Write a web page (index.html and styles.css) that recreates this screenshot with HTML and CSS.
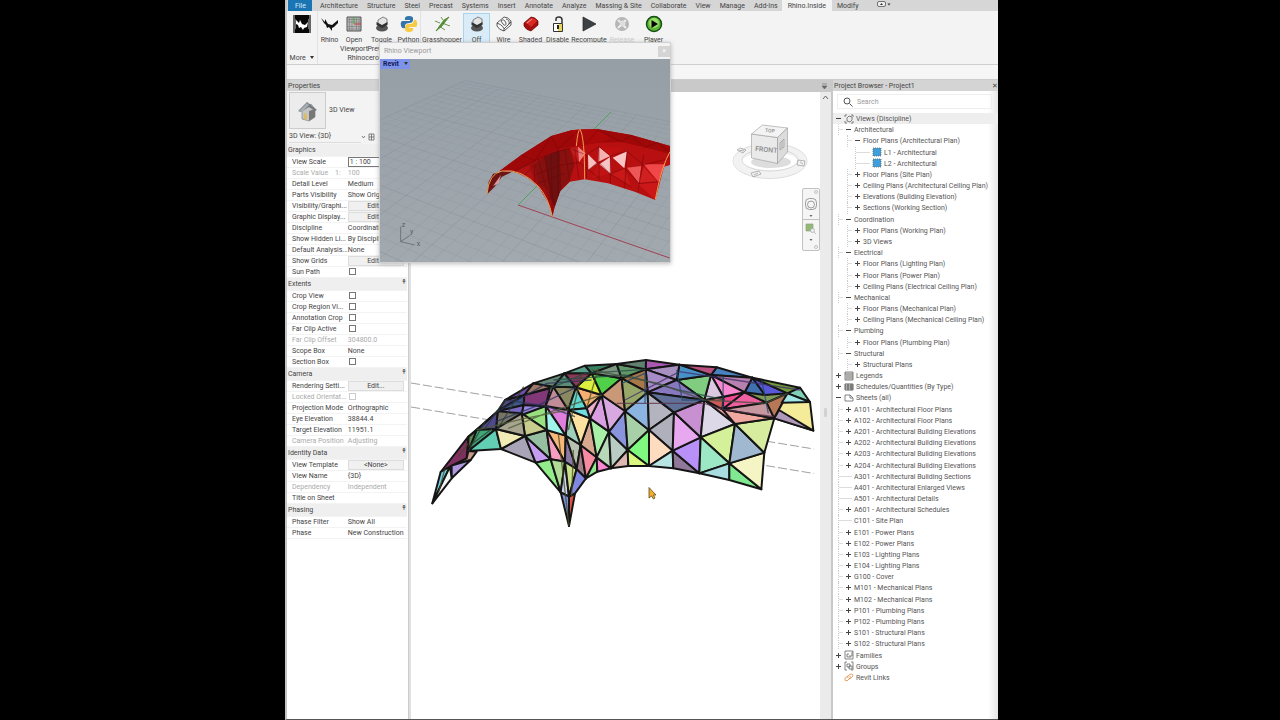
FILE: index.html
```html
<!DOCTYPE html>
<html lang="en">
<head>
    <meta charset="UTF-8">
    <meta name="viewport" content="width=device-width, initial-scale=1.0">
    <title>Project1 - 3D View</title>
    <link rel="stylesheet" href="styles.css">
</head>
<body>
    <div class="app">
        <nav class="tabs">
            <button class="file">File</button>
            <button>Architecture</button>
            <button>Structure</button>
            <button>Steel</button>
            <button>Precast</button>
            <button>Systems</button>
            <button>Insert</button>
            <button>Annotate</button>
            <button>Analyze</button>
            <button>Massing &amp; Site</button>
            <button>Collaborate</button>
            <button>View</button>
            <button>Manage</button>
            <button>Add-Ins</button>
            <button class="active">Rhino.Inside</button>
            <button>Modify</button>
            <button class="more-tabs" aria-label="Ribbon display">
                <svg width="14" height="7" viewBox="0 0 14 7"><rect x=".5" y=".5" width="8" height="5" rx="1.5" fill="#eee" stroke="#555" stroke-width=".8"/><path d="M3 4l1.500-2L6 4zM10.500 2.500h3L12 4.500z" fill="#333"/></svg>
            </button>
        </nav>

        <div class="ribbon">
            <div class="panel first">
                <button class="tool" aria-label="Rhino.Inside">
                    <svg viewBox="0 0 18 18"><path d="M0 0h18v18H0z" fill="#666"/><path d="M2 0h14v4h-1v10h1v4H2v-4h1V4H2z" fill="#080808"/><path d="M3 5l3 3 1-3 2 4 3 1 3-3-1 5-3 1-1 2-2-3-2 1-1-3-2-1z" fill="#fff"/></svg>
                </button>
                <button class="caption">More <span class="down"></span></button>
            </div>
            <div class="panel rhino">
                <div class="tools">
                    <button class="tool"><svg viewBox="0 0 18 18"><path d="M0 3l4 4V4l3 5 4 1 6-5v3l-4 4-2 1v3l-3-4-2 1-1-3-2-2z" fill="#111"/></svg>Rhino</button>
                    <button class="tool open"><svg viewBox="0 0 18 18"><path d="M2 2h14v14H2z" fill="#b9b9b9" stroke="#555"/><path d="M4.500 2v14M7 2v14M11.500 2v14M14 2v14M2 4.500h14M2 7h14M2 11.500h14M2 14h14" stroke="#777" stroke-width=".6"/><path d="M9 9h7" stroke="#c33"/><path d="M9 2v7" stroke="#3a3"/></svg>Open<br>Viewport</button>
                    <button class="tool toggle-tool"><svg viewBox="0 0 18 18"><ellipse cx="9" cy="13" rx="6" ry="3.500" fill="#555"/><path d="M5 5l5-3 4 2v5l-5 3-4-3z" fill="#e4e4e4" stroke="#555" stroke-width=".7"/><path d="M3.500 7l5.500 3 5.500-3v3l-5.500 3-5.500-3z" fill="#333"/></svg>Toggle<br>Previews</button>
                    <button class="tool"><svg viewBox="0 0 18 18"><path d="M9 1q-5 0-4 4h5v1H3q-3 0-2 5 1 3 4 2v-3q1-2 4-2 4 0 4-3 1-4-4-4z" fill="#3474a9"/><path d="M9 17q5 0 4-4H9v-1h6q3 0 2-5-1-3-3-2-1 4-3 4-5-1-6 3-1 5 4 5z" fill="#f6cb42"/></svg>Python</button>
                </div>
                <span class="caption">Rhinoceros</span>
            </div>
            <div class="tools">
                <button class="tool grass"><svg viewBox="0 0 18 18"><path d="M3 16l5-7 3-4 5-3-4 5-3 4zM7 8L2 6M9 8l8 3M6 11l6 4M10 5L8 2" fill="#5c9838" stroke="#477d29" stroke-width=".8"/></svg>Grasshopper</button>
                <button class="tool on"><svg viewBox="0 0 18 18"><ellipse cx="9" cy="13" rx="6" ry="3.500" fill="#555"/><path d="M5 5l5-3 4 2v5l-5 3-4-3z" fill="#e4e4e4" stroke="#555" stroke-width=".7"/><path d="M3.500 7l5.500 3 5.500-3v3l-5.500 3-5.500-3z" fill="#333"/></svg>Off</button>
                <button class="tool"><svg viewBox="0 0 18 18" fill="#f7f7f7" stroke="#333" stroke-width=".8"><path d="M2 8l7-6q4 0 7 4v4l-7 6q-5-1-7-5z"/><path d="M9 16q1-5-7-8m7 6l7-7M6 6q3-3 5 2 0 4-3 1zM11 4q4 1 3 5" fill="none"/></svg>Wire</button>
                <button class="tool"><svg viewBox="0 0 18 18"><path d="M2 8l7-6q4 0 7 4v4l-7 6q-5-1-7-5z" fill="#a31010" stroke="#650505" stroke-width=".7"/><path d="M3 8l6-5q4 0 6 3l-6 6q-2-3-6-4z" fill="#d82a26"/><path d="M5 8l5-4" stroke="#ff9f97"/></svg>Shaded</button>
                <button class="tool"><svg viewBox="0 0 18 18"><path d="M7 6V4q0-2 3-2 3 0 3 3v3" fill="none" stroke="#333" stroke-width="1.500"/><path d="M4.500 8.500h9v8h-9z" fill="#fff" stroke="#333"/><path d="M10 9h3v7h-4z" fill="#e7d55c"/><path d="M8 10h2v4H8z" fill="#222"/></svg>Disable</button>
                <button class="tool wide"><svg viewBox="0 0 18 18"><path d="M3 2l13 7-13 7z" fill="#3d4144" stroke="#222" stroke-width=".7"/></svg>Recompute</button>
                <button class="tool dim"><svg viewBox="0 0 18 18"><circle cx="9" cy="9" r="7" fill="#b6b6b6"/><path d="M5 5l8 8m0-8l-8 8" stroke="#eee" stroke-width="2"/><path d="M6 7l4-2 3 4-4 3z" fill="#ddd"/></svg>Release</button>
                <button class="tool player"><svg viewBox="0 0 18 18"><circle cx="9" cy="9" r="7.500" fill="#5fb53a" stroke="#174d16" stroke-width="1.500"/><circle cx="9" cy="8" r="5" fill="#98df68"/><path d="M6.500 5l6.500 4-6.500 4z" fill="#050505"/></svg>Player</button>
            </div>
        </div>
        <div class="options"></div>

        <main class="work">
            <section class="properties">
                <h2>Properties</h2>
                <div class="type">
                    <button aria-label="Type"><svg width="22" height="22" viewBox="0 0 22 22"><path d="M5 10v9l7 2 6-4v-8l-4-5z" fill="#c5c5c5" stroke="#777" stroke-width=".6"/><path d="M12 11v10l6-4V9z" fill="#777"/><path d="M1 11l9-9 10 8-2 1-6-4-8 5z" fill="#737b80"/><path d="M2 11l8-8 2 2-7 7z" fill="#a8afb3"/><path d="M7 13l3 1v6l-3-1z" fill="#dbbd65"/></svg></button>
                    <span>3D View</span>
                </div>
                <div class="instance">
                    <select aria-label="Instance"><option>3D View: {3D}</option></select>
                    <svg width="14" height="8" viewBox="0 0 14 8" fill="none" stroke="#555" stroke-width=".7"><path d="M1 3l1.500 2L4 3"/><path d="M8 1h5v6H8zM10.500 1v6M8 4h5"/></svg>
                </div>
                <table>
                    <tbody>
                        <tr class="group"><th colspan="2">Graphics</th></tr>
                        <tr><th>View Scale</th><td><input class="scale" type="text" value="1 : 100" aria-label="View Scale"></td></tr>
                        <tr class="off"><th>Scale Value &nbsp;&nbsp; 1:</th><td>100</td></tr>
                        <tr><th>Detail Level</th><td>Medium</td></tr>
                        <tr><th>Parts Visibility</th><td>Show Original</td></tr>
                        <tr><th>Visibility/Graphi...</th><td><button>Edit...</button></td></tr>
                        <tr><th>Graphic Display...</th><td><button>Edit...</button></td></tr>
                        <tr><th>Discipline</th><td>Coordination</td></tr>
                        <tr><th>Show Hidden Li...</th><td>By Discipline</td></tr>
                        <tr><th>Default Analysis...</th><td>None</td></tr>
                        <tr><th>Show Grids</th><td><button>Edit...</button></td></tr>
                        <tr><th><label for="sun">Sun Path</label></th><td><input type="checkbox" id="sun"></td></tr>
                        <tr class="group"><th colspan="2">Extents<i>&#8607;</i></th></tr>
                        <tr><th><label for="crop">Crop View</label></th><td><input type="checkbox" id="crop"></td></tr>
                        <tr><th><label for="region">Crop Region Vi...</label></th><td><input type="checkbox" id="region"></td></tr>
                        <tr><th><label for="anno">Annotation Crop</label></th><td><input type="checkbox" id="anno"></td></tr>
                        <tr><th><label for="clip">Far Clip Active</label></th><td><input type="checkbox" id="clip"></td></tr>
                        <tr class="off"><th>Far Clip Offset</th><td>304800.0</td></tr>
                        <tr><th>Scope Box</th><td>None</td></tr>
                        <tr><th><label for="section">Section Box</label></th><td><input type="checkbox" id="section"></td></tr>
                        <tr class="group"><th colspan="2">Camera<i>&#8607;</i></th></tr>
                        <tr><th>Rendering Setti...</th><td><button>Edit...</button></td></tr>
                        <tr class="off"><th><label for="locked">Locked Orientat...</label></th><td><input type="checkbox" id="locked" disabled></td></tr>
                        <tr><th>Projection Mode</th><td>Orthographic</td></tr>
                        <tr><th>Eye Elevation</th><td>38844.4</td></tr>
                        <tr><th>Target Elevation</th><td>11951.1</td></tr>
                        <tr class="off"><th>Camera Position</th><td>Adjusting</td></tr>
                        <tr class="group"><th colspan="2">Identity Data<i>&#8607;</i></th></tr>
                        <tr><th>View Template</th><td><button>&lt;None&gt;</button></td></tr>
                        <tr><th>View Name</th><td>{3D}</td></tr>
                        <tr class="off"><th>Dependency</th><td>Independent</td></tr>
                        <tr><th>Title on Sheet</th><td></td></tr>
                        <tr class="group"><th colspan="2">Phasing<i>&#8607;</i></th></tr>
                        <tr><th>Phase Filter</th><td>Show All</td></tr>
                        <tr><th>Phase</th><td>New Construction</td></tr>
                    </tbody>
                </table>
            </section>

            <section class="canvas">
                <div class="viewbar"><svg width="7" height="7" viewBox="0 0 7 7"><path d="M1 1h5M1 3h5L3.500 6z" fill="#666" stroke="#666" stroke-width=".6"/></svg></div>
                <svg class="scene" viewBox="411 92 409 627" preserveAspectRatio="xMidYMin meet">
                    <g stroke="#777" stroke-width=".7" stroke-dasharray="9 3">
                        <path d="M411 383L814 449M411 407L814 473.500"/>
                    </g>
                    <g id="mesh" transform="translate(425 350) scale(.33333)"></g>
                    <path d="M649 487.500v10.500l2.500-2 2 3 1.500-1-1.500-3h2.500z" fill="#f2ae27" stroke="#4c3716" stroke-width=".7"/>
                    <g class="cube">
                        <ellipse cx="770" cy="161" rx="32" ry="13" fill="none" stroke="#f2f2f2" stroke-width="8"/>
                        <ellipse cx="770" cy="161" rx="37" ry="17.500" fill="none" stroke="#c6c6c6" stroke-width=".6"/>
                        <ellipse cx="770" cy="160" rx="28" ry="11" fill="none" stroke="#c6c6c6" stroke-width=".6"/>
                        <ellipse cx="771" cy="162" rx="20" ry="6" fill="#ddd"/>
                        <path d="M751.500 134l26 3.500v26l-26-5.500z" fill="#eaeaea" stroke="#999" stroke-width=".6"/>
                        <path d="M751.500 134l11-9 25 3-10 9.500z" fill="#f3f3f3" stroke="#999" stroke-width=".6"/>
                        <path d="M777.500 137.500l10-9.500v24l-10 11.500z" fill="#dcdcdc" stroke="#999" stroke-width=".6"/>
                        <text x="755" y="151" font-size="7" transform="rotate(5 755 151)">FRONT</text>
                        <text x="765" y="132" font-size="5" transform="rotate(5 765 132)">TOP</text>
                        <g fill="none" stroke="#999" stroke-width=".7"><path d="M737 150l3-2 6 2-3 3zM739 150l5 1M798 160l7 1-1 5-7-1zM800 162l3 2M751 173l8-2 2 3-8 3zM754 175l4-2M780 143l4-4v8l-4 3zM782 141v7"/></g>
                    </g>
                    <g class="navbar" fill="none" stroke="#a9a9a9" stroke-width=".7">
                        <rect x="802.500" y="188.500" width="17" height="62" rx="1.500" fill="#f5f5f5"/>
                        <path d="M803 219.500h16"/><circle cx="816" cy="192" r="1.500"/><circle cx="816" cy="247" r="1.500"/>
                        <rect x="805.500" y="198.500" width="11" height="11" rx="4" stroke="#777"/><circle cx="811" cy="204.500" r="3.500" stroke="#777"/>
                        <path d="M806 224h7v7h-7z" fill="#94b878" stroke="#8ba87a"/><circle cx="812.500" cy="230.500" r="2" fill="#eee"/><path d="M814 232l2 2"/>
                        <path d="M809.500 215h3l-1.500 2zM809.500 239h3l-1.500 2z" fill="#666" stroke="none"/>
                    </g>
                </svg>
                <div class="scroll"><button aria-label="Scroll up"><svg width="7" height="5" viewBox="0 0 7 5"><path d="M1 4l2.500-3L6 4" fill="none" stroke="#666"/></svg></button><span></span></div>
            </section>

            <section class="browser">
                <h2>Project Browser - Project1 <button aria-label="Close">&#10005;</button></h2>
                <label class="search">
                    <svg width="10" height="10" viewBox="0 0 10 10" fill="none" stroke="#555"><circle cx="4" cy="4" r="3"/><path d="M6.500 6.500l3 3"/></svg>
                    <input type="search" placeholder="Search">
                </label>
                <ul class="tree" id="tree"></ul>
            </section>
        </main>

        <section class="float">
            <header>Rhino Viewport <button aria-label="Close">&#215;</button></header>
            <div class="rhino-view">
                <svg viewBox="380 59 290 203" preserveAspectRatio="xMidYMid slice">
                    <g transform="translate(378 40) scale(.33333)">
                        <g id="grid" fill="none" stroke="#87909a" stroke-width="1.500"></g>
                        <path d="M420 495L875 654" stroke="#a04050" stroke-width="3"/>
                        <path d="M420 495L700 215" stroke="#4ea45c" stroke-width="3"/>
                        <g id="shell"></g>
                        <g fill="none" stroke="#f0a050" stroke-width="3"><path d="M327 463Q332 400 372 393Q430 385 482 440Q512 475 523 530M595 318Q600 268 606 268Q620 290 620 418M876 335Q850 380 832 478"/></g>
                        <g fill="none" stroke="#555e66" stroke-width="2"><path d="M68 560v45l42 10M68 605l27-18"/></g>
                        <g class="axis"><text x="71" y="562">z</text><text x="96" y="583">y</text><text x="116" y="618">x</text></g>
                    </g>
                </svg>
                <button class="view-name">Revit<span class="down"></span></button>
            </div>
        </section>
    </div>
    <script src="script.js"></script>
</body>
</html>
```
FILE: styles.css
```css
* {
    box-sizing: border-box;
}
body {
    margin: 0;
    background: #000;
    color: #444;
    font-family: Roboto, "Noto Sans", sans-serif;
    font-size: 7px;
    line-height: 9px;
    display: grid;
    grid-template-columns: 285fr 713fr 282fr;
    min-height: 100vh;
}
button, input, select {
    font: inherit;
    color: inherit;
    margin: 0;
    padding: 0;
    border: 0;
    background: none;
}
h2 {
    margin: 0;
    font-size: 7px;
    font-weight: normal;
}
.app {
    grid-column: 2;
    position: relative;
    display: flex;
    flex-direction: column;
    background: #f3f3f3;
    border-left: 2px solid #c4c4c8;
    border-bottom: 1px solid #555;
    min-width: 0;
}
.down {
    display: inline-block;
    border: 2px solid transparent;
    border-top: 3px solid #333;
    border-bottom: 0;
    margin-left: 3px;
    vertical-align: 1px;
}

/* ribbon */
.tabs {
    display: flex;
    height: 11px;
    background: #d6d6d6;
    padding-left: 1px;
}
.tabs button {
    padding: 1px 4px 0 5px;
    white-space: nowrap;
}
.tabs .file {
    width: 24px;
    background: #1c75b3;
    color: #d6ebf8;
    margin-right: 3px;
}
.tabs .active {
    background: #f3f3f3;
    padding: 1px 6px 0;
}
.tabs .more-tabs {
    margin-left: 10px;
}
.ribbon {
    display: flex;
    height: 54px;
    border-bottom: 1px solid #cfcfcf;
}
.panel {
    display: flex;
    flex-direction: column;
    justify-content: space-between;
    align-items: center;
    border-right: 1px solid #e2e2e2;
}
.caption {
    padding-bottom: 1px;
}
.first {
    width: 31px;
}
.rhino {
    width: 103px;
}
.rhino .caption {
    padding-right: 8px;
}
.tools {
    display: flex;
}
.tool {
    width: 27px;
    padding-top: 4px;
    display: flex;
    flex-direction: column;
    align-items: center;
    justify-content: flex-start;
    text-align: center;
}
.rhino .tool {
    width: 24px;
}
.rhino .open {
    width: 25px;
}
.rhino .toggle-tool {
    width: 30px;
}
.tool svg {
    display: block;
    flex: none;
    width: 18px;
    height: 18px;
    margin-bottom: 3px;
}
.tool.grass {
    width: 42px;
}
.tool.wide {
    width: 36px;
}
.tool.dim {
    width: 30px;
    color: #ccc;
}
.tool.player {
    width: 33px;
}
.tool.on {
    background: #d9ecf7;
    border: 1px solid #a8d4ee;
    padding-top: 1px;
    margin-top: 2px;
}
.options {
    height: 15px;
    background: #f6f6f6;
    border-bottom: 1px solid #ccc;
}

.work {
    flex: 1;
    display: grid;
    grid-template-columns: 122px 1fr 167px;
    min-height: 0;
}
.work h2 {
    height: 11px;
    padding: 1px 0 0 1px;
    background: #d4d4d4;
    display: flex;
    align-items: center;
    justify-content: space-between;
}

/* properties */
.properties {
    background: #fff;
    display: flex;
    flex-direction: column;
    border-right: 1px solid #ccc;
}
.type {
    background: #f3f3f3;
    display: flex;
    align-items: center;
    gap: 3px;
    padding: 1px 2px;
}
.type button {
    width: 37px;
    height: 37px;
    border: 1px solid #ccc;
    background: #ececec;
    display: grid;
    place-items: center;
}
.instance {
    height: 14px;
    background: #f3f3f3;
    display: flex;
    align-items: center;
    padding-left: 2px;
}
.instance select {
    width: 72px;
    height: 12px;
    appearance: none;
    border-bottom: 1px solid #ddd;
}
.properties table {
    width: 120px;
    border-collapse: collapse;
}
.properties th, .properties td {
    padding: 0;
    height: 11px;
    line-height: 10px;
    font-weight: normal;
    text-align: left;
    white-space: nowrap;
    border-bottom: 1px solid #f3f3f3;
}
.properties th {
    width: 58px;
    padding-left: 5px;
}
.properties .group th {
    height: 12px;
    padding-left: 1px;
    background: #efefef;
}
.properties .group ~ .group th {
    height: 13px;
}
.group i {
    float: right;
    font-style: normal;
    line-height: 7px;
}
.off {
    color: #aaa;
}
td button {
    display: block;
    width: 56px;
    height: 10px;
    line-height: 8px;
    background: #f0f0f0;
    border: 1px solid #ddd;
}
td .scale {
    display: block;
    width: 58px;
    height: 10px;
    border: 1px solid #777;
    padding-left: 1px;
}
td input[type="checkbox"] {
    appearance: none;
    display: block;
    width: 7px;
    height: 7px;
    margin-left: 1px;
    border: 1px solid #777;
    background: #fff;
}
td input[type="checkbox"]:disabled {
    border-color: #ccc;
}

/* drawing area */
.canvas {
    background: #fff;
    display: grid;
    grid-template-columns: 1fr 11px;
    grid-template-rows: 12px 1fr;
    border-left: 2px solid #e0e0e0;
    min-width: 0;
}
.viewbar {
    grid-column: 1 / 3;
    background: #c9c9c9;
    display: flex;
    justify-content: flex-end;
    align-items: center;
    padding-right: 3px;
}
.scene {
    width: 100%;
    height: auto;
}
.cube text {
    fill: #888;
    font-weight: 500;
}
.scroll {
    background: #ebebeb;
    display: flex;
    flex-direction: column;
    align-items: center;
}
.scroll button {
    height: 11px;
    display: grid;
    place-items: center;
}
.scroll span {
    width: 3px;
    height: 9px;
    border-radius: 1px;
    background: #d2d2d2;
    margin-top: 305px;
}

/* project browser */
.browser {
    background: linear-gradient(90deg, #fff 94%, #e6e6e6);
    border-left: 2px solid #c8c8c8;
    display: flex;
    flex-direction: column;
    min-width: 0;
}
.search {
    margin: 3px 6px 4px 4px;
    height: 15px;
    padding-left: 5px;
    border: 1px solid #eee;
    display: flex;
    align-items: center;
    gap: 4px;
}
.search input {
    width: 100px;
    padding-top: 1px;
    outline: none;
}
.search input::placeholder {
    color: #999;
}
.tree {
    flex: 1;
    list-style: none;
    margin: 0 0 36px;
    padding: 0;
    display: grid;
    grid-auto-rows: 1fr;
}
.tree li {
    display: flex;
    align-items: center;
    gap: 2px;
    white-space: nowrap;
    color: #555;
}
.tree li:first-child {
    background: #eee;
}
.tree li > svg {
    flex: none;
}
.tree li > span {
    padding-top: 2px;
}
.l0 {
    padding-left: 2px;
}
.l1 {
    padding-left: 5px;
}
.l2 {
    padding-left: 14px;
}
.l3 {
    padding-left: 22px;
}
.l1::before, .l2::before, .l3::before {
    content: "";
    width: 4px;
    height: 100%;
    border-left: 1px dotted #ccc;
    background: linear-gradient(#ddd, #ddd) center / 100% 1px no-repeat;
}
.l3::before {
    width: 14px;
}
.l1.leaf::before {
    width: 13px;
}
.toggle {
    width: 7px;
    height: 7px;
    display: grid;
    place-items: center;
}

/* floating viewport */
.float {
    position: absolute;
    left: 92px;
    top: 42px;
    width: 292px;
    background: #f3f3f3;
    border: 1px solid #d0d0d0;
    border-top-right-radius: 2px;
    box-shadow: 0 1px 4px #8888;
}
.float header {
    height: 16px;
    padding-left: 4px;
    display: flex;
    justify-content: space-between;
    align-items: center;
    color: #999;
}
.float header button {
    width: 12px;
    height: 11px;
    background: #d5d5d5;
    color: #fff;
}
.rhino-view {
    position: relative;
    background: linear-gradient(#969ea6, #a2a9af);
}
.rhino-view svg {
    display: block;
    width: 100%;
}
.axis {
    font-size: 21px;
    fill: #555e66;
}
.view-name {
    position: absolute;
    left: 0;
    top: 0;
    height: 10px;
    padding: 1px 2px 0 3px;
    background: #7d93ea;
    color: #111a55;
    font-weight: bold;
}
.view-name .down {
    margin-left: 5px;
}
```
FILE: script.js
```js
// project browser: level, toggle, label, icon
const tree = [
    [0, "-", "Views (Discipline)", "views"],
    [1, "-", "Architectural"],
    [2, "-", "Floor Plans (Architectural Plan)"],
    [3, "", "L1 - Architectural", "plan"],
    [3, "", "L2 - Architectural", "plan"],
    [2, "+", "Floor Plans (Site Plan)"],
    [2, "+", "Ceiling Plans (Architectural Ceiling Plan)"],
    [2, "+", "Elevations (Building Elevation)"],
    [2, "+", "Sections (Working Section)"],
    [1, "-", "Coordination"],
    [2, "+", "Floor Plans (Working Plan)"],
    [2, "+", "3D Views"],
    [1, "-", "Electrical"],
    [2, "+", "Floor Plans (Lighting Plan)"],
    [2, "+", "Floor Plans (Power Plan)"],
    [2, "+", "Ceiling Plans (Electrical Ceiling Plan)"],
    [1, "-", "Mechanical"],
    [2, "+", "Floor Plans (Mechanical Plan)"],
    [2, "+", "Ceiling Plans (Mechanical Ceiling Plan)"],
    [1, "-", "Plumbing"],
    [2, "+", "Floor Plans (Plumbing Plan)"],
    [1, "-", "Structural"],
    [2, "+", "Structural Plans"],
    [0, "+", "Legends", "legend"],
    [0, "+", "Schedules/Quantities (By Type)", "table"],
    [0, "-", "Sheets (all)", "sheet"],
    [1, "+", "A101 - Architectural Floor Plans"],
    [1, "+", "A102 - Architectural Floor Plans"],
    [1, "+", "A201 - Architectural Building Elevations"],
    [1, "+", "A202 - Architectural Building Elevations"],
    [1, "+", "A203 - Architectural Building Elevations"],
    [1, "+", "A204 - Architectural Building Elevations"],
    [1, "", "A301 - Architectural Building Sections"],
    [1, "", "A401 - Architectural Enlarged Views"],
    [1, "", "A501 - Architectural Details"],
    [1, "+", "A601 - Architectural Schedules"],
    [1, "", "C101 - Site Plan"],
    [1, "+", "E101 - Power Plans"],
    [1, "+", "E102 - Power Plans"],
    [1, "+", "E103 - Lighting Plans"],
    [1, "+", "E104 - Lighting Plans"],
    [1, "+", "G100 - Cover"],
    [1, "+", "M101 - Mechanical Plans"],
    [1, "+", "M102 - Mechanical Plans"],
    [1, "+", "P101 - Plumbing Plans"],
    [1, "+", "P102 - Plumbing Plans"],
    [1, "+", "S101 - Structural Plans"],
    [1, "+", "S102 - Structural Plans"],
    [0, "+", "Families", "family"],
    [0, "+", "Groups", "group"],
    [0, " ", "Revit Links", "link"]
];
const icons = {
    views: '<path d="M1 3V1h2M7 1h2v2M9 7v2H7M3 9H1V7M3 4l2-2 3 1v3L6 8 3 7z"/>',
    plan: '<path d="M1 1h8v8H1z" fill="#3f9fdc" stroke="#666" stroke-dasharray="1 1"/>',
    legend: '<path d="M1 1h8v8H1zM1 3h8M2 5h3M2 7h3M6 4v4M8 4v4" fill="#ddd"/>',
    table: '<path d="M1 2h8v6H1zM1 4h8M1 6h8M4 2v6M7 2v6" stroke="#333"/>',
    sheet: '<path d="M1 2h5l3 3v3H1zM6 2v3h3"/>',
    family: '<path d="M1 1h8v8H1zM3 7V4h2M5 6h3V2M3 7h4"/>',
    group: '<path d="M3 1H1v8h2M7 1h2v8H7M3 3h3v3H3zM5 5h3v3H5z"/>',
    link: '<path d="M4 6Q3 4 5 3l2-1q2 0 2 2L7 6 5 7M6 4q1 2-1 3L3 9Q0 9 1 6l3-2" stroke="#e08a45"/>'
};
document.getElementById("tree").innerHTML = tree.map(([level, mark, text, icon]) => {
    let row = "";
    if (mark) {
        const d = mark == "+" ? "M1 3.5h5M3.5 1v5" : mark == "-" ? "M1 3.5h5" : "";
        row += d ? `<button class="toggle" aria-label="Toggle ${text}"><svg width="7" height="7"><path d="${d}" stroke="#444"/></svg></button>` : '<span class="toggle"></span>';
    }
    if (icon) row += `<svg width="10" height="10" fill="none" stroke="#666" stroke-width=".8">${icons[icon]}</svg>`;
    return `<li class="l${level}${mark ? "" : " leaf"}">${row}<span>${text}</span></li>`;
}).join("");

const poly = (points, fill) => `<polygon points="${points}" fill="${fill}"/>`;

// canopy panels
const panels = `218,184 240,150 298,135|#504878
240,150 325,100 298,135|#7050a8
298,135 296,165 218,184|#405888
296,165 290,195 218,184|#7868c0
218,184 290,190 213,237|#777568
218,184 213,237 155,240|#504890
155,240 213,237 130,303|#40a878
213,237 228,297 130,303|#62cfb4
130,260 155,240 130,303|#608850
130,260 218,184 155,240|#655a87
47,366 130,260 125,325|#803060
125,325 130,303 155,305 137,330 80,347|#c89888
80,347 137,330 80,385|#b098e0
47,366 75,350 22,460|#70d0e8
75,350 80,385 22,460|#f4f6f6
228,297 300,258 332,338|#a9a4b8
213,237 228,297 300,258|#f3ebb5
300,258 377,328 332,338|#c49cf0
300,258 365,240 377,328|#95bfa0
332,338 377,328 407,427|#93ec8c
365,240 420,335 377,328|#f79ec0
365,240 422,257 420,335|#f6b878
377,328 420,335 407,427|#b0dc98
420,335 432,440 407,427|#c9d6ee
407,427 432,440 432,528|#7b94dc
432,440 450,430 432,528|#e0504a
420,335 455,357 432,440|#c8e088
422,257 455,357 420,335|#8a7aa8
422,257 467,285 455,357|#b8c0b0
455,357 483,385 450,430 432,440|#8088e0
467,285 483,385 455,357|#a08088
467,285 515,322 483,385|#f58aa0
495,205 467,285 515,322|#d8a890
495,205 552,245 515,322|#a8f0a8
515,322 517,365 483,385|#90e890
515,322 558,355 517,365|#f888d0
552,245 558,355 515,322|#b8d8b8
552,245 608,300 558,355|#b8ccc4
608,300 610,348 558,355|#dcb8b0
600,183 552,245 608,300|#8a94dc
495,205 530,135 552,245|#d8a0e0
530,135 600,183 552,245|#d8a8e0
430,180 495,205 467,285|#fbe2a0
430,180 467,285 422,257|#a0d0bc
362,168 430,180 422,257|#e080dc
362,168 422,257 365,240|#a0f4ec
362,168 365,240 290,190|#98e080
290,190 365,240 300,258|#c8cc8c
213,237 290,190 300,258|#a8a490
296,165 362,168 290,195|#9c88e4
298,135 375,115 362,168 296,165|#803878
325,100 385,110 298,135|#a07868
385,110 362,168 430,180|#c08c98
385,110 453,112 430,180|#8c8860
453,112 430,180 485,175|#60d8d4
453,112 530,135 485,175|#f4b070
485,175 530,135 495,205|#ecaec8
430,180 485,175 495,205|#70dce0
453,112 500,70 530,135|#dcf040
500,70 590,85 530,135|#50d048
530,135 590,85 600,183|#c89878
418,70 453,112 385,110|#5c8c78
418,70 500,70 453,112|#8c3858
418,70 480,47 500,70|#58a08c
480,47 575,42 500,70|#388060
575,42 590,85 500,70|#7c9880
325,100 418,70 385,110|#688878
600,183 672,240 608,300|#a8d0a8
608,300 672,240 672,348|#80f880
608,300 672,348 610,348|#d8f880
600,183 668,127 672,240|#8cb4e0
668,127 747,187 672,240|#b4b4c0
672,240 747,187 743,302|#b0b0bc
672,240 743,302 672,348|#ffdcc0
743,302 745,355 672,348|#b8e4e4
743,302 823,370 745,355|#907898
743,302 827,262 823,370|#b890f8
747,187 827,262 743,302|#e8a8f0
747,187 838,150 827,262|#c890d0
838,150 930,222 827,262|#dcd8e8
827,262 930,222 913,340|#d4f098
827,262 913,340 823,370|#9ce8c4
913,340 913,390 823,370|#a8dce0
913,340 1009,418 913,390|#80e890
913,340 1018,308 1009,418|#f4f4c4
930,222 1018,308 913,340|#a0b8d0
930,222 1048,205 1018,308|#d8eca0
838,150 893,178 930,222|#e8a0a0
893,178 1048,205 930,222|#f0a8a0
838,150 895,140 893,178|#d05858
895,140 959,127 893,178|#f04890
893,178 959,127 1025,158|#f060a0
893,178 1025,158 1048,205|#c898a0
959,127 1088,130 1025,158|#809858
1025,158 1088,130 1048,205|#b87858
1088,130 1155,156 1165,242 1048,205|#f4ec98
1062,180 1165,242 1048,205|#b098b8
982,83 959,127 1020,135|#4070b0
982,83 1088,130 1020,135|#5858d8
982,83 1125,113 1088,130|#70983c
1125,113 1155,156 1088,130|#80d0b8
1088,130 1155,156 1070,158|#a0e8e8
875,52 982,83 858,75|#4880c0
858,75 982,83 959,127|#b880b0
858,75 959,127 895,140|#f888d0
858,75 838,150 895,140|#dcc8e0
755,90 858,75 838,150|#80cc80
763,44 858,75 755,90|#4890c8
763,44 875,52 858,75|#b85080
663,30 763,44 662,58|#a858b0
662,58 763,44 755,90|#a890c0
662,58 755,90 668,127|#a88cc8
668,127 755,90 838,150|#8878c0
668,127 838,150 747,187|#607098
590,85 662,58 668,127|#a87848
590,85 668,127 600,183|#98a868
575,42 662,58 590,85|#609868
575,42 663,30 662,58|#608070`;
// far side members seen through the glass
const back = [
    "M240 150L362 168L450 200M218 184L365 100L500 90M213 215L330 170L453 112", "M155 240L300 205L430 180M250 235L362 190L530 135",
    "M575 160H838L893 178L1045 200", "M375 115L480 70L662 58M385 90L600 75L760 120L900 150", "M600 150L763 65L930 90L1125 120",
    "M590 100L660 70V160M755 60L772 150L838 150M895 80L893 178M1010 90L1030 190", "M180 215L130 303M200 237L130 290M240 150L180 235M296 110L218 237",
    "M60 355L40 430M100 320L130 280M400 250L432 528M445 300L440 440M470 70L430 240M520 55L485 175", "M500 60L700 100L838 150L1020 160L1088 130"
];
const backColors = ["#29335c", "#4b5a35", "#57324a", "#274c46", "#3d2f66", "#24476b", "#2d3f36", "#4b4620", "#4a5040"];
document.getElementById("mesh").innerHTML =
    '<g stroke="#151515" stroke-width="6" stroke-linejoin="round">' +
    panels.split("\n").map(line => poly(...line.split("|"))).join("") + "</g>" +
    back.map((d, i) => `<path d="${d}" fill="none" stroke="${backColors[i]}" stroke-width="4" opacity=".75"/>`).join("");

// construction plane grid
let lines = "";
for (let d = 0, i = 0; d < 1100; d += 13 + i * 1.2, i++) {
    const x = 262 - d, y = 122 + 0.46 * d, slope = 0.2 + 0.00038 * d;
    lines += `<path d="M${x} ${y}L900 ${y + slope * (900 - x)}" opacity="${i % 5 ? 0.5 : 1}"/>`;
}
for (let u = 0, i = 0; u < 1300; u += 20 + i * 0.6, i++) {
    const x = 262 + u, y = 122 + 0.2 * u, slope = 0.46 + 0.00123 * u;
    lines += `<path d="M${x} ${y}L${x - 900} ${y + slope * 900}" opacity="${i % 5 ? 0.5 : 1}"/>`;
}
document.getElementById("grid").innerHTML = lines;

// red preview shell
const shell = `327,463 332,425 345,402 372,393 400,397 372,410 350,440|#6d1515
345,438 369,405 362,430|#d89a98
365,393 430,345 520,288 580,271 660,268 760,285 876,318 876,375 858,380 832,480 770,455 690,430 620,418 575,425 545,455 530,500 523,530 512,490 482,440 440,405 400,394|#b80f10
365,393 430,345 520,288 580,271 660,268 760,285 876,318 876,342 800,322 730,306 660,308 600,318 540,328 470,362 410,394|#9f0809
400,394 470,362 540,328 575,425 545,455 530,500 523,530 512,490 482,440 440,405|#9a0e0f
470,375 500,350 510,450 482,430|#84100f
500,350 545,330 550,445 530,500 515,470|#6e0f10
545,330 575,325 590,375 575,420 552,440|#88100f
410,394 455,375 470,425|#b01212
580,271 606,268 660,268 700,296 660,308 600,318|#ac090a
575,325 600,320 603,367|#c22020
600,320 623,340 603,367|#f08080
630,343 657,370 631,390|#f4c0c0
663,320 697,348 661,365|#f6b0b0
696,351 698,402 664,373|#f5c4c4
704,353 747,334 739,385|#fac4c4
747,383 790,378 783,430|#ec5858
797,373 862,373 841,425|#f04848
697,348 663,320 740,325|#c01010
698,402 739,385 760,440|#c81818
783,430 797,380 838,425|#d02020
780,432 838,428 830,478|#cc1818
662,373 696,402 640,415|#c01414`;
const ribs = "M625 345V415M663 320V420M697 348V430M747 334L740 445M797 345L780 455M410 394L470 362L520 340L575 325L625 345L663 320L697 348L747 334L797 375L876 355M430 345L470 362L520 290L540 328L600 272L625 310L660 270L730 306L760 286L800 322L840 308L876 340M440 405L470 375V425M500 350L530 500M560 325L575 425M520 340L523 520M480 355L515 480M540 328V470M590 322L603 418M603 367L660 412M631 390L661 365L697 402L760 440M739 385L783 430L838 425M697 402L739 385M470 405L550 375L603 367M480 430L560 400";
document.getElementById("shell").innerHTML =
    shell.split("\n").map(line => poly(...line.split("|"))).join("") +
    `<path d="${ribs}" fill="none" stroke="#6c0505" stroke-width="2" opacity=".7"/>`;
```
